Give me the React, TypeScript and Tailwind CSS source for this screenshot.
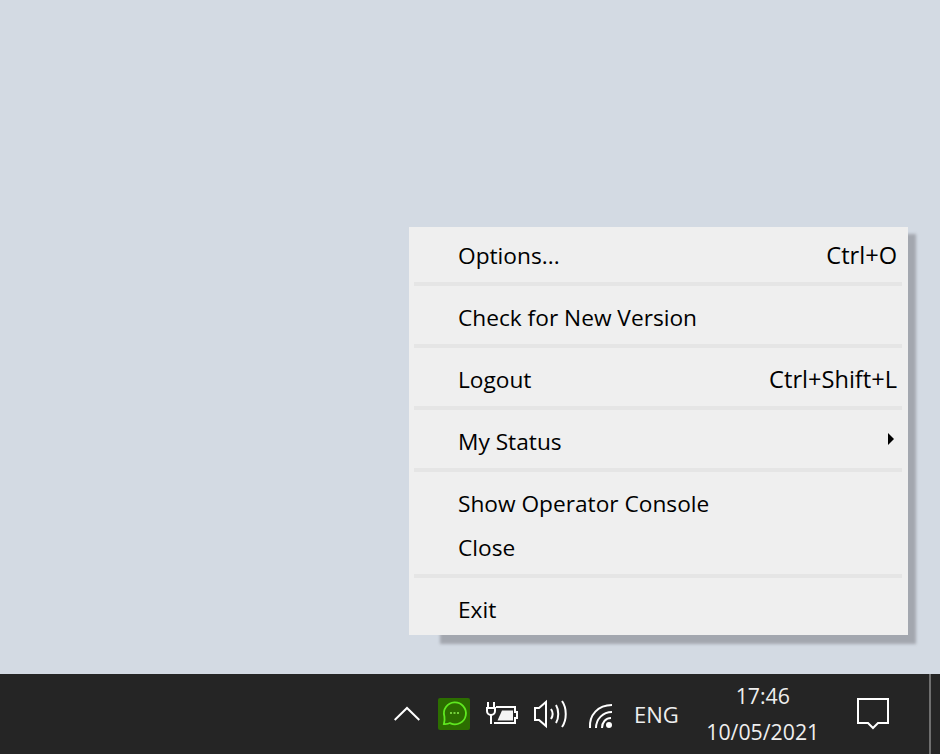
const font = "font-['Open_Sans','Noto_Sans',sans-serif]";

function Row({ label, shortcut, arrow }: { label: string; shortcut?: string; arrow?: boolean }) {
  return (
    <div className="flex h-[44px] items-center justify-between pl-[49px] pr-[11px] text-[22.7px] text-black">
      <span>{label}</span>
      {shortcut && <span className="text-[23.6px]">{shortcut}</span>}
      {arrow && <span className="mb-[6px] mr-[3px] h-0 w-0 border-y-[6px] border-l-[6px] border-y-transparent border-l-black" />}
    </div>
  );
}

function Sep() {
  return <div className="mb-[10px] ml-[5px] mr-[6px] mt-[4px] h-[4px] bg-[#e5e5e5]" />;
}

export default function App() {
  return (
    <div className={`isolate flex h-[754px] w-[940px] flex-col overflow-hidden bg-[#d3dae3] ${font}`}>
      <div className="flex flex-1 justify-end pr-[32px] pt-[227px]">
        <div className="relative h-[408px] w-[499px] bg-[#efefef] pb-[3px] pt-[7px]">
          <div className="absolute bottom-[-9px] left-[31px] right-[-8px] top-[7px] -z-10 bg-[#a3a7af] blur-[1.5px]" />
          <Row label="Options..." shortcut="Ctrl+O" />
          <Sep />
          <Row label="Check for New Version" />
          <Sep />
          <Row label="Logout" shortcut="Ctrl+Shift+L" />
          <Sep />
          <Row label="My Status" arrow />
          <Sep />
          <Row label="Show Operator Console" />
          <Row label="Close" />
          <Sep />
          <Row label="Exit" />
        </div>
      </div>
      <div className="flex h-[80px] items-center bg-[#252525] pl-[394px] text-white">
        <svg width="26" height="16" viewBox="0 0 26 16" fill="none" stroke="#fff" strokeWidth="2">
          <path d="M0.7 14 13 2l12.3 12" />
        </svg>
        <svg className="ml-[18px] rounded-[2px] bg-[#2c6e00]" width="32" height="32" viewBox="0 0 32 32" fill="none" stroke="#5fe81f" strokeWidth="1.8">
          <path d="M12.5 25.4A11 11 0 1 0 6.4 18.5c.4 2.4.2 5-.5 7.5 2.4.3 5-.4 6.8-1.2" />
          <path d="M12 15h2M15.5 15h2M19 15h2" stroke="#8cf04f" strokeWidth="1.6" />
        </svg>
        <svg className="ml-[16px]" width="32" height="24" viewBox="0 0 32 24" fill="none" stroke="#fff" strokeWidth="2">
          <path d="M2 0v6M8 0v6M1 6h8v3a4 4 0 0 1-8 0zM5 13v9" />
          <path d="M10 5h19v5h2v6h-2v5H8" />
          <path d="M16 8.5h11v10H11.500z" fill="#f4f4f4" stroke="none" />
        </svg>
        <svg className="ml-[16px]" width="34" height="30" viewBox="0 0 34 30" fill="none" stroke="#fff" strokeWidth="2">
          <path d="M1 9h4l7-6v24l-7-6H1z" />
          <path d="M17 10c2 3 2 7 0 10M22 6c3 5 3 13 0 18M28 2c5 7 5 19 0 26" />
        </svg>
        <svg className="ml-[20px] mt-[4px]" width="26" height="26" viewBox="0 0 26 26" fill="none" stroke="#fff" strokeWidth="2">
          <path d="M2 25C1 12 10 2 24 2M8 25c0-9 7-16 16-16M14 25c0-6 4-10 9-10" />
          <circle cx="21" cy="22" r="3" fill="#fff" stroke="none" />
        </svg>
        <span className="ml-[20px] text-[22px] leading-none text-[#eeeeee]">ENG</span>
        <div className="ml-[27px] flex w-[114px] flex-col items-center text-[21.3px] leading-[36px] text-[#eeeeee]">
          <span>17:46</span>
          <span>10/05/2021</span>
        </div>
        <svg className="ml-[36px]" width="34" height="34" viewBox="0 0 34 34" fill="none" stroke="#fff" strokeWidth="2">
          <path d="M2 2h30v24H22l-5 5-5-5H2z" />
        </svg>
        <div className="ml-[39px] h-[80px] w-[2px] bg-[#6f6f6f]" />
      </div>
    </div>
  );
}
